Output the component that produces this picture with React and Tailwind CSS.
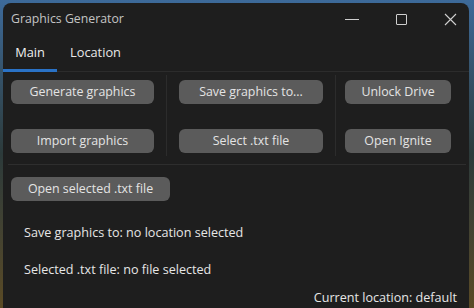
const font = { fontFamily: '"Open Sans", "Noto Sans", sans-serif' };

function Btn({ children, className = "" }) {
  return (
    <button
      className={
        "block h-[24px] rounded-[6px] bg-[#5b5b5b] text-[12.4px] leading-none text-[#e4e4e4] " +
        className
      }
    >
      {children}
    </button>
  );
}

export default function App() {
  return (
    <div
      className="h-[308px] w-[474px] overflow-hidden bg-gradient-to-b from-[#3d6a9a] via-[#2c3a3a] to-[#5a4a24] pl-[3px] pt-[3px]"
      style={font}
    >
      <div className="h-[305px] w-[466px] rounded-t-[8px] bg-[#1e1e1e] text-[#dcdcdc]">
        {/* title bar */}
        <div className="flex h-[32px] items-center justify-between">
          <span className="pl-[8px] text-[12.3px] text-[#c4c4c4]">Graphics Generator</span>
          <div className="flex items-center gap-[37px] pr-[12px]">
            <div className="h-px w-[14px] bg-[#cfcfcf]"></div>
            <div className="h-[11px] w-[11px] rounded-[1px] border border-[#cfcfcf]"></div>
            <svg width="13" height="13" viewBox="0 0 13 13" stroke="#d0d0d0" strokeWidth="1.1">
              <path d="M1 1 L12 12 M12 1 L1 12" />
            </svg>
          </div>
        </div>

        {/* tabs */}
        <div className="flex h-[37px] border-b border-[#2c2c2c]">
          <div className="relative flex w-[54px] items-center justify-center text-[12.8px] text-[#f0f0f0]">
            Main
            <div className="absolute bottom-[-1px] left-0 h-[3px] w-[54px] bg-[#2a72c6]"></div>
          </div>
          <div className="flex items-center pl-[13px] text-[12.8px] text-[#e8e8e8]">Location</div>
        </div>

        {/* button grid */}
        <div className="flex pt-[3px] pl-[8px]">
          <div className="flex w-[155px] flex-col gap-[25px] pt-[5px]">
            <Btn className="w-[143px]">Generate graphics</Btn>
            <Btn className="w-[143px]">Import graphics</Btn>
          </div>
          <div className="h-[81px] w-px bg-[#2c2c2c]"></div>
          <div className="flex w-[168px] flex-col gap-[25px] pt-[5px] pl-[12px]">
            <Btn className="w-[144px]">Save graphics to...</Btn>
            <Btn className="w-[144px]">Select .txt file</Btn>
          </div>
          <div className="h-[81px] w-px bg-[#2c2c2c]"></div>
          <div className="flex flex-col gap-[25px] pt-[5px] pl-[9px]">
            <Btn className="w-[106px]">Unlock Drive</Btn>
            <Btn className="w-[106px]">Open Ignite</Btn>
          </div>
        </div>

        <div className="mt-[8px] ml-[5px] h-px w-[458px] bg-[#2e2e2e]"></div>

        <div className="pt-[12px] pl-[8px]">
          <Btn className="w-[159px]">Open selected .txt file</Btn>
        </div>

        <div className="pt-[22px] pl-[21px] text-[12.6px] leading-[20px] text-[#e6e6e6]">
          Save graphics to: no location selected
        </div>
        <div className="pt-[17px] pl-[21px] text-[12.6px] leading-[20px] text-[#e6e6e6]">
          Selected .txt file: no file selected
        </div>
        <div className="flex justify-end pt-[8px] pr-[12px] text-[12.6px] leading-[20px] text-[#e6e6e6]">
          Current location: default
        </div>
      </div>
    </div>
  );
}
